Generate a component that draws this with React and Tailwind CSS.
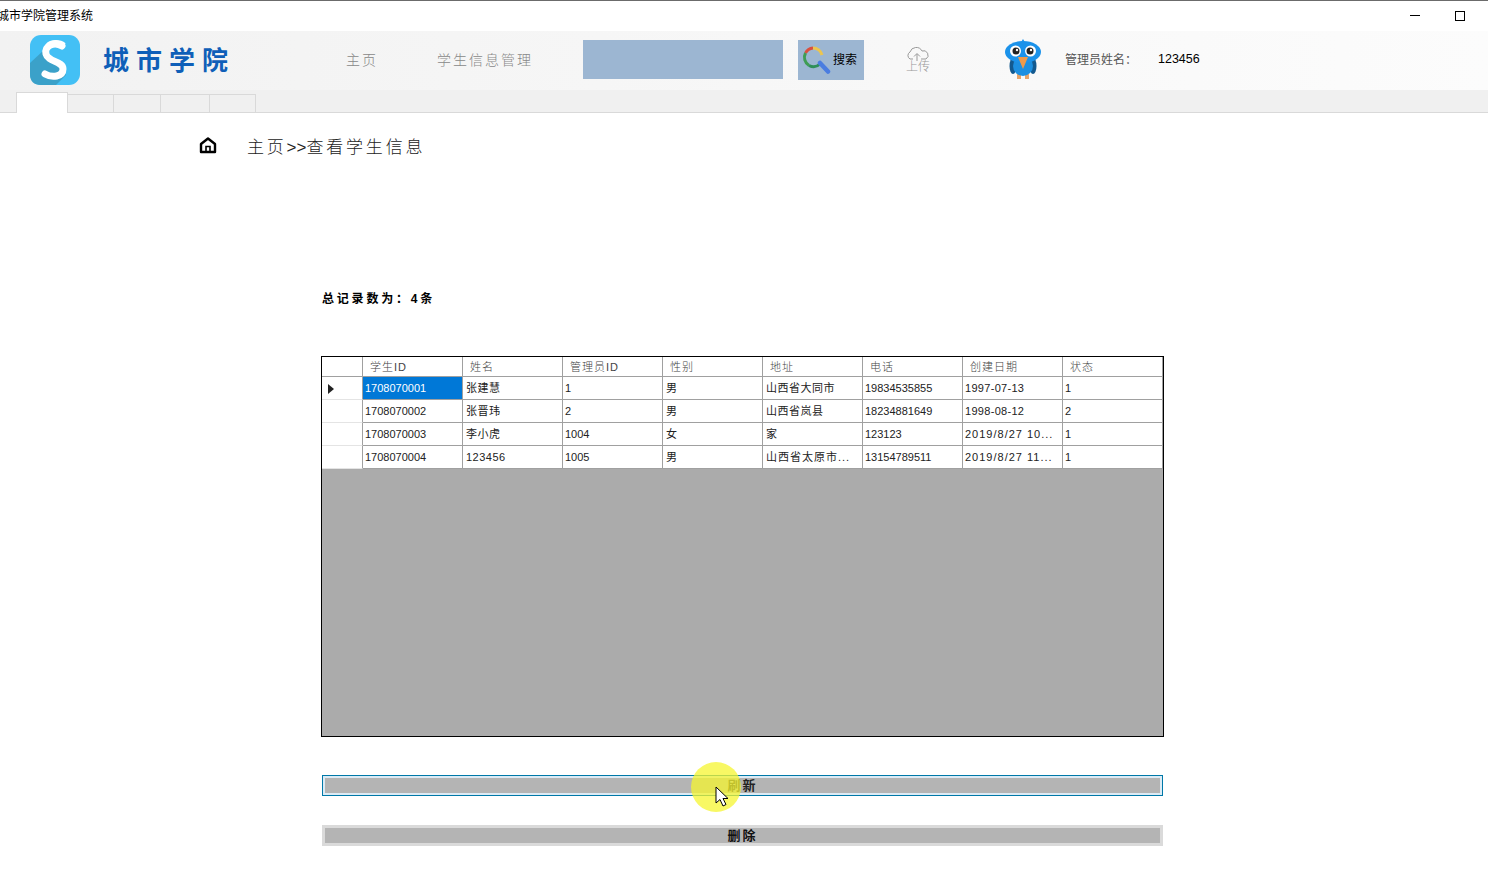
const cjk = "font-['Liberation_Sans','Noto_Sans_CJK_SC',sans-serif]";

const columns = ["学生ID", "姓名", "管理员ID", "性别", "地址", "电话", "创建日期", "状态"];
const rows = [
  ["1708070001", "张建慧", "1", "男", "山西省大同市", "19834535855", "1997-07-13", "1"],
  ["1708070002", "张晋玮", "2", "男", "山西省岚县", "18234881649", "1998-08-12", "2"],
  ["1708070003", "李小虎", "1004", "女", "家", "123123", "2019/8/27 10...", "1"],
  ["1708070004", "123456", "1005", "男", "山西省太原市...", "13154789511", "2019/8/27 11...", "1"],
];

function Logo() {
  return (
    <svg width="50" height="50" viewBox="0 0 50 50">
      <rect width="50" height="50" rx="11" fill="#43c0f5" />
      <path d="M0 28 L14 15 L36 40 L26 50 L11 50 Q0 50 0 39 Z" fill="#3ba1c9" />
      <path d="M32 11 C24 6 14 11 16 19 C18 27 33 26 33 34 C33 42 22 43 15 39" fill="none" stroke="#fff" strokeWidth="7" strokeLinecap="round" />
      <path d="M17 9 C22 5 30 5 35 9" fill="none" stroke="#fff" strokeWidth="2" />
    </svg>
  );
}

function SearchIcon() {
  return (
    <svg width="30" height="30" viewBox="0 0 30 30">
      <path d="M12 3 A9.5 9.5 0 0 0 4.5 8" fill="none" stroke="#d9503f" strokeWidth="3" />
      <path d="M4.5 8 A9.5 9.5 0 0 0 8 20.5" fill="none" stroke="#3f9d54" strokeWidth="3" />
      <path d="M8 20.5 A9.5 9.5 0 0 0 19 19" fill="none" stroke="#2f8f5a" strokeWidth="3" />
      <path d="M12 3 A9.5 9.5 0 0 1 21 10" fill="none" stroke="#ecc54f" strokeWidth="3" />
      <path d="M19 18 L27 26.5" stroke="#4a7de0" strokeWidth="4.5" strokeLinecap="round" />
    </svg>
  );
}

function Bird() {
  return (
    <svg width="36" height="41" viewBox="0 0 36 41">
      <ellipse cx="8" cy="27" rx="3.5" ry="8" fill="#13598f" />
      <ellipse cx="28" cy="27" rx="3.5" ry="8" fill="#13598f" />
      <path d="M12 35h4v5h-4zM20 35h4v5h-4z" fill="#e8a468" />
      <ellipse cx="18" cy="27" rx="10" ry="10" fill="#1d8fe0" />
      <path d="M18 0l-3 5h6z" fill="#1b92ea" />
      <ellipse cx="18" cy="13" rx="18" ry="11" fill="#1b92ea" />
      <circle cx="10.5" cy="12" r="5.5" fill="#fff" />
      <circle cx="25.5" cy="12" r="5.5" fill="#fff" />
      <circle cx="11" cy="12" r="3.5" fill="#222" />
      <circle cx="25" cy="12" r="3.5" fill="#222" />
      <circle cx="12" cy="11" r="1.2" fill="#fff" />
      <circle cx="26" cy="11" r="1.2" fill="#fff" />
      <path d="M13 18h10l-5 12z" fill="#ef9a4a" />
    </svg>
  );
}

function Cell({ children, selected, header, wide, spaced, dated }) {
  return (
    <div
      className={`border-r border-b border-[#a0a0a0] overflow-hidden whitespace-nowrap flex items-center ${
        header ? "pl-[7px] pt-px text-[11px] tracking-[1px] text-[#444] font-light" : "text-[11px] text-[#222]"
      } ${wide ? "pl-[3px] tracking-[0.5px]" : ""} ${!header && !wide ? "pl-[2px]" : ""} ${dated ? "tracking-[0.3px]" : ""} ${
        spaced ? "tracking-[1px]" : ""
      } ${selected ? "bg-[#0078d7] text-white" : "bg-white"}`}
    >
      {children}
    </div>
  );
}

export default function App() {
  return (
    <div className={`relative w-[1488px] h-[884px] overflow-hidden bg-white ${cjk}`}>
      {/* title bar */}
      <div className="h-[31px] border-t border-[#6b6b6b] flex items-center justify-between">
        <span className="-ml-[3px] text-xs text-black">城市学院管理系统</span>
        <div className="-mt-[1px] flex items-center gap-[35px] pr-[23px]">
          <div className="w-[10px] h-px bg-black" />
          <div className="w-[10px] h-[10px] border border-black" />
        </div>
      </div>

      {/* top nav */}
      <div className="h-[59px] flex items-center bg-gradient-to-r from-[#f2f2f2] to-[#fcfcfc]">
        <div className="ml-[30px] w-[50px] h-[50px] -mt-[2px]"><Logo /></div>
        <span className="ml-[23px] w-[127px] text-[26px] leading-none font-bold tracking-[7px] text-[#0f5fb8] whitespace-nowrap">城市学院</span>
        <span className="ml-[116px] -mt-[2px] text-sm tracking-[2px] text-[#888] font-light">主页</span>
        <span className="ml-[59px] -mt-[2px] text-sm tracking-[2px] text-[#888] font-light">学生信息管理</span>
        <div className="ml-[50px] -mt-[2px] w-[200px] h-[39px] bg-[#9cb6d2]" />
        <div className="ml-[15px] -mt-[2px] w-[66px] h-[40px] bg-[#9cb6d2] flex items-center pl-[3px]">
          <SearchIcon />
          <span className="ml-[2px] text-xs text-black whitespace-nowrap">搜索</span>
        </div>
        <div className="ml-[41px] -mt-[2px] w-[26px] flex flex-col items-center text-[#999]">
          <svg width="26" height="14" viewBox="0 0 26 14" fill="none" stroke="#999" strokeWidth="1">
            <path d="M8 12 H5 A4 4 0 0 1 5 5 A6.5 6.5 0 0 1 17 4 A4.5 4.5 0 0 1 21 12 H16" />
            <path d="M12 14 V7 M9 9.5 L12 6.5 L15 9.5" />
          </svg>
          <span className="text-xs leading-[12px] whitespace-nowrap font-light">上传</span>
        </div>
        <div className="ml-[74px] -mt-[3px] w-[36px]"><Bird /></div>
        <span className="ml-[24px] -mt-[2px] text-xs text-[#555] whitespace-nowrap">管理员姓名：</span>
        <span className="ml-[21px] -mt-[2px] text-[12.5px] text-black">123456</span>
      </div>

      {/* tab strip */}
      <div className="h-[23px] bg-[#f0f0f0] border-b border-[#d9d9d9] flex items-end pl-[16px]">
        <div className="w-[52px] h-[21px] -mb-px bg-white border-t border-x border-[#d9d9d9]" />
        <div className="w-[46px] h-[18px] border-t border-r border-[#d9d9d9]" />
        <div className="w-[47px] h-[18px] border-t border-r border-[#d9d9d9]" />
        <div className="w-[49px] h-[18px] border-t border-r border-[#d9d9d9]" />
        <div className="w-[46px] h-[18px] border-t border-r border-[#d9d9d9]" />
      </div>

      {/* breadcrumb */}
      <div className="flex items-center mt-[21px] pl-[199px] h-[24px]">
        <svg className="-mt-[2px]" width="18" height="18" viewBox="0 0 18 18" fill="none" stroke="#000" strokeWidth="2.4">
          <path d="M2 8 L9 2.5 L16 8 V16 H2 Z" strokeLinejoin="round" />
          <path d="M7 16 V10.5 H11 V16" strokeWidth="1.6" />
        </svg>
        <span className="ml-[30px] mt-[4px] text-[17px] tracking-[2.8px] text-[#222] font-light whitespace-nowrap">
          主页<span className="tracking-normal">&gt;&gt;</span>查看学生信息
        </span>
      </div>

      <div className="pl-[321px] w-[1164px]">
        <div className="mt-[131px] h-[20px] pl-[1px] flex items-center text-xs font-bold tracking-[2.8px] text-black whitespace-nowrap">总记录数为：4条</div>

        {/* grid */}
        <div className="mt-[47px] w-[843px] h-[381px] border border-black bg-[#ababab]">
          <div className="grid grid-cols-[41px_repeat(8,100px)] grid-rows-[20px_repeat(4,23px)]">
            <Cell header />
            {columns.map((c) => <Cell header key={c}>{c}</Cell>)}
            {rows.map((row, i) => [
              <div key={`h${i}`} className="bg-white border-r border-b border-r-[#a0a0a0] border-b-[#e4e4e4] flex items-center pl-[6px]">
                {i === 0 && <div className="mt-[1px] w-0 h-0 border-y-[5px] border-y-transparent border-l-[6px] border-l-[#222]" />}
              </div>,
              ...row.map((v, j) => (
                <Cell
                  key={`${i}-${j}`}
                  selected={i === 0 && j === 0}
                  wide={j === 1 || j === 3 || j === 4}
                  dated={j === 6}
                  spaced={v.endsWith("...")}
                >
                  {v}
                </Cell>
              )),
            ])}
          </div>
        </div>

        {/* buttons */}
        <div className="mt-[38px] ml-[1px] w-[841px] h-[21px] border border-[#0078a8] bg-[#b4b4b4] shadow-[inset_0_0_0_2px_#dcebf5] flex items-center justify-center text-[13px] font-bold tracking-[2px] text-[#222]">刷新</div>
        <div className="mt-[29px] ml-[1px] w-[841px] h-[21px] border-[3px] border-[#dadada] bg-[#b4b4b4] flex items-center justify-center text-[13px] font-bold tracking-[2px] text-[#111]">删除</div>
      </div>

      {/* recording cursor highlight */}
      <div className="absolute left-[691px] top-[762px] w-[50px] h-[50px] rounded-full bg-[#f6f530]/75" />
      <svg className="absolute left-[715px] top-[786px]" width="16" height="22" viewBox="0 0 16 22">
        <path d="M1 1 V17 L5 13.5 L8 20 L11 18.5 L8 12.5 H13 Z" fill="#fff" stroke="#000" strokeWidth="1" />
      </svg>
    </div>
  );
}
